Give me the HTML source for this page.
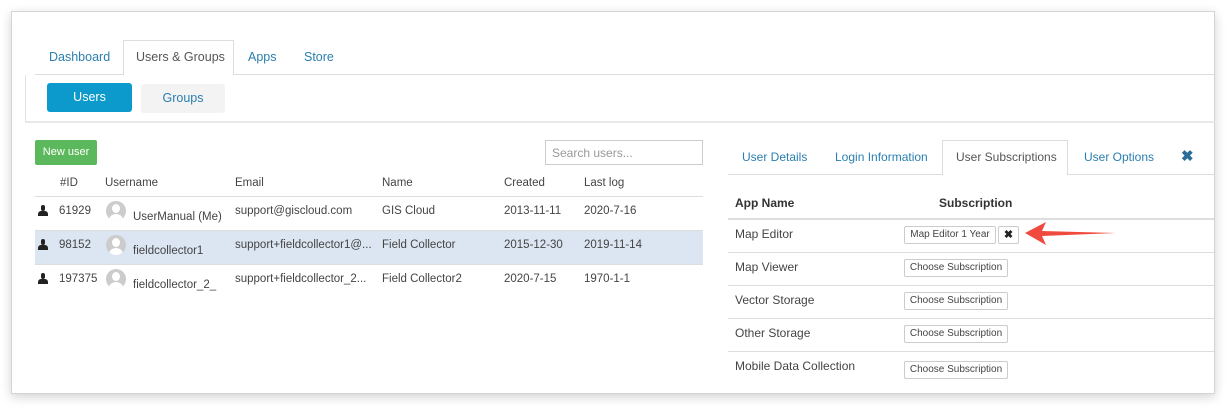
<!DOCTYPE html>
<html><head><meta charset="utf-8"><style>
*{box-sizing:border-box;margin:0;padding:0}
body{width:1230px;height:413px;background:#fff;position:relative;overflow:hidden;font-family:"Liberation Sans",sans-serif;font-size:12px;color:#444}
.a{position:absolute;white-space:nowrap}
.t{font-size:11.5px}
.win{position:absolute;left:11px;top:11px;width:1204px;height:383px;border:1px solid #d4d4d4;box-shadow:0 3px 10px rgba(0,0,0,.18);background:#fff}
.blue{color:#2a7fb0}
.hl{position:absolute;height:1px;background:#ddd}
.btn{position:absolute;border:1px solid #ccc;border-radius:2px;background:#fff;font-size:10px;color:#444;text-align:center;line-height:16px;height:18px}
.av{position:absolute;width:20px;height:20px;border-radius:50%;background:#ccc;overflow:hidden}
.av:before{content:"";position:absolute;left:6px;top:3px;width:8px;height:9px;border-radius:50%;background:#fff}
.av:after{content:"";position:absolute;left:3px;top:13px;width:14px;height:12px;border-radius:50%;background:#fff}
.pi{position:absolute;width:10px;height:12px}
.pi:before{content:"";position:absolute;left:3px;top:0;width:4px;height:6px;border-radius:2px;background:#222}
.pi:after{content:"";position:absolute;left:0;top:6px;width:10px;height:5px;border-radius:3px 3px 0 0;background:#222}
</style></head><body>
<div class="win"></div>
<div class="hl" style="left:35px;top:74px;width:1179px"></div>
<div class="a" style="left:123px;top:40px;width:111px;height:35px;border:1px solid #ddd;border-bottom:none;background:#fff"></div>
<div class="a blue" style="left:49px;top:50px;font-size:12.5px">Dashboard</div>
<div class="a" style="left:136px;top:50px;font-size:12.5px;color:#555">Users &amp; Groups</div>
<div class="a blue" style="left:248px;top:50px;font-size:12.5px">Apps</div>
<div class="a blue" style="left:304px;top:50px;font-size:12.5px">Store</div>
<div class="a" style="left:25px;top:75px;width:1190px;height:48px;border-left:1px solid #e3e3e3;border-bottom:2px solid #e8e8e8"></div>
<div class="a" style="left:47px;top:83px;width:85px;height:29px;background:#0b9acb;border-radius:3px;color:#fff;text-align:center;line-height:29px;font-size:12.5px">Users</div>
<div class="a" style="left:141px;top:84px;width:84px;height:29px;background:#f3f3f3;border-radius:3px;color:#2a7fb0;text-align:center;line-height:29px;font-size:12.5px">Groups</div>
<div class="a" style="left:35px;top:140px;width:62px;height:25px;background:#5cb85c;border-radius:2px;color:#fff;font-size:11px;text-align:center;line-height:24px">New user</div>
<div class="a" style="left:545px;top:140px;width:158px;height:25px;border:1px solid #ccc;color:#999;font-size:12px;padding:5px 6px">Search users...</div>
<div class="a t" style="left:60px;top:177px">#ID</div>
<div class="a t" style="left:105px;top:177px">Username</div>
<div class="a t" style="left:235px;top:177px">Email</div>
<div class="a t" style="left:382px;top:177px">Name</div>
<div class="a t" style="left:504px;top:177px">Created</div>
<div class="a t" style="left:584px;top:177px">Last log</div>
<div class="hl" style="left:35px;top:196px;width:668px"></div>
<div class="a" style="left:35px;top:230px;width:668px;height:34px;background:#dbe6f2"></div>
<div class="hl" style="left:35px;top:230px;width:668px"></div>
<div class="hl" style="left:35px;top:264px;width:668px"></div>

<div class="pi" style="left:38px;top:205px"></div>
<div class="a t" style="left:59px;top:205px">61929</div>
<div class="av" style="left:106px;top:201px"></div>
<div class="a t" style="left:133px;top:211px">UserManual (Me)</div>
<div class="a t" style="left:235px;top:205px">support@giscloud.com</div>
<div class="a t" style="left:382px;top:205px">GIS Cloud</div>
<div class="a t" style="left:504px;top:205px">2013-11-11</div>
<div class="a t" style="left:584px;top:205px">2020-7-16</div>

<div class="pi" style="left:38px;top:239px"></div>
<div class="a t" style="left:59px;top:239px">98152</div>
<div class="av" style="left:106px;top:235px"></div>
<div class="a t" style="left:133px;top:245px">fieldcollector1</div>
<div class="a t" style="left:235px;top:239px">support+fieldcollector1@...</div>
<div class="a t" style="left:382px;top:239px">Field Collector</div>
<div class="a t" style="left:504px;top:239px">2015-12-30</div>
<div class="a t" style="left:584px;top:239px">2019-11-14</div>

<div class="pi" style="left:38px;top:273px"></div>
<div class="a t" style="left:59px;top:273px">197375</div>
<div class="av" style="left:106px;top:269px"></div>
<div class="a t" style="left:133px;top:279px">fieldcollector_2_</div>
<div class="a t" style="left:235px;top:273px">support+fieldcollector_2...</div>
<div class="a t" style="left:382px;top:273px">Field Collector2</div>
<div class="a t" style="left:504px;top:273px">2020-7-15</div>
<div class="a t" style="left:584px;top:273px">1970-1-1</div>
<div class="hl" style="left:728px;top:174px;width:486px"></div>
<div class="a" style="left:942px;top:140px;width:126px;height:35px;border:1px solid #ddd;border-bottom:none;background:#fff"></div>
<div class="a blue" style="left:742px;top:150px;font-size:12px">User Details</div>
<div class="a blue" style="left:835px;top:150px;font-size:12px">Login Information</div>
<div class="a" style="left:956px;top:150px;font-size:12px;color:#555">User Subscriptions</div>
<div class="a blue" style="left:1084px;top:150px;font-size:12px">User Options</div>
<div class="a" style="left:1181px;top:147px;font-size:15px;font-weight:bold;color:#2a6f9a">✖</div>
<div class="a" style="left:735px;top:196px;font-weight:bold;color:#333">App Name</div>
<div class="a" style="left:939px;top:196px;font-weight:bold;color:#333">Subscription</div>
<div class="hl" style="left:728px;top:218px;width:486px;height:2px"></div>
<div class="hl" style="left:728px;top:252px;width:486px"></div>
<div class="hl" style="left:728px;top:285px;width:486px"></div>
<div class="hl" style="left:728px;top:318px;width:486px"></div>
<div class="hl" style="left:728px;top:351px;width:486px"></div>
<div class="a" style="left:735px;top:227px">Map Editor</div>
<div class="a" style="left:735px;top:260px">Map Viewer</div>
<div class="a" style="left:735px;top:293px">Vector Storage</div>
<div class="a" style="left:735px;top:326px">Other Storage</div>
<div class="a" style="left:735px;top:359px">Mobile Data Collection</div>
<div class="btn" style="left:904px;top:226px;width:92px">Map Editor 1 Year</div>
<div class="btn" style="left:998px;top:226px;width:21px;font-size:11px;font-weight:bold;color:#222">✖</div>
<div class="btn" style="left:904px;top:259px;width:104px">Choose Subscription</div>
<div class="btn" style="left:904px;top:292px;width:104px">Choose Subscription</div>
<div class="btn" style="left:904px;top:325px;width:104px">Choose Subscription</div>
<div class="btn" style="left:904px;top:361px;width:104px">Choose Subscription</div>
<svg class="a" style="left:1022px;top:220px" width="96" height="28"><path d="M3 13 L24 2 L20 11 L94 13 L20 16 L24 25 Z" fill="#f04a3e"/></svg>
</body></html>
